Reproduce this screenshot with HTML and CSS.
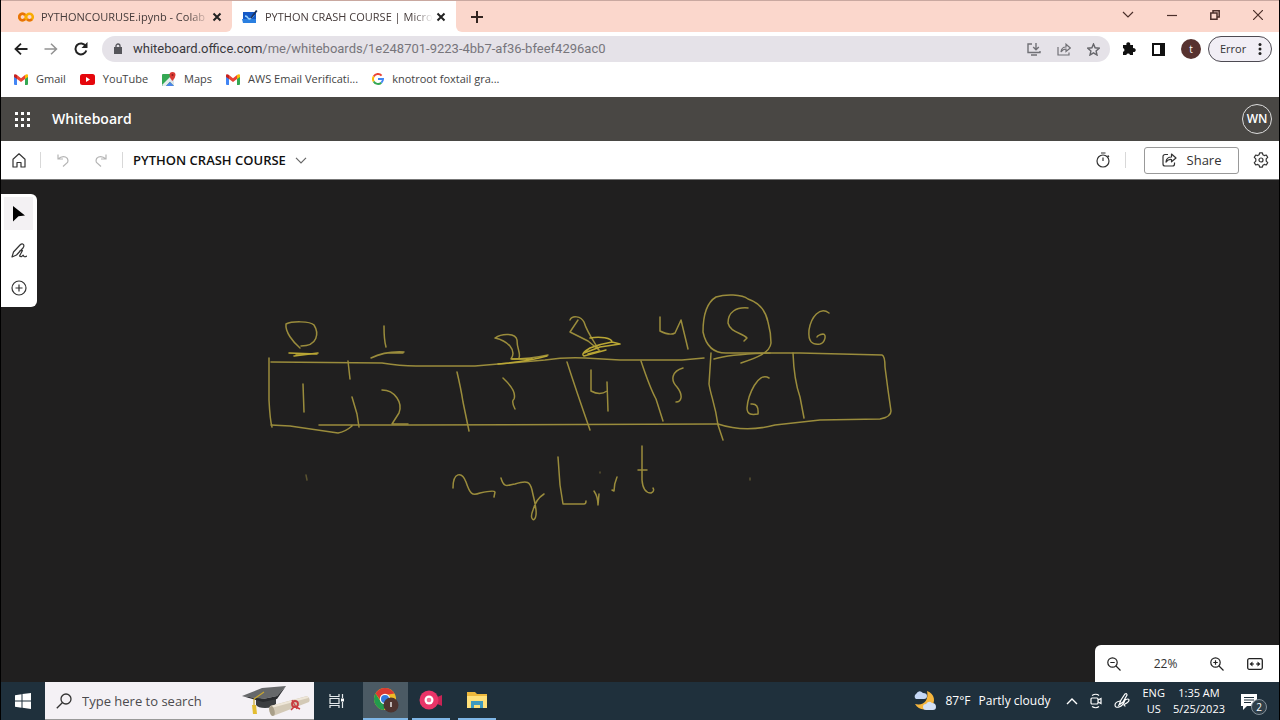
FILE: index.html
```html
<!DOCTYPE html>
<html lang="en">
<head>
<meta charset="utf-8">
<title>PYTHON CRASH COURSE | Microsoft Whiteboard</title>
<link rel="stylesheet" href="styles.css">
</head>
<body>
<svg class="defs" width="0" height="0" aria-hidden="true">
  <symbol id="gmail" viewBox="0 0 14 11"><path d="M0 2v8a1 1 0 0 0 1 1h2V4z" fill="#4285f4"/><path d="M14 2v8a1 1 0 0 1-1 1h-2V4z" fill="#34a853"/><path d="M3 5V1l4 3.200L11 1v4L7 8z" fill="#ea4335"/><path d="M0 3V1.500C0 0 1.500-.4 3 1v4z" fill="#c5221f"/><path d="M14 3V1.500C14 0 12.500-.4 11 1v4z" fill="#fbbc04"/></symbol>
  <symbol id="close" viewBox="0 0 10 10"><path d="M1.500 1.500l7 7M8.500 1.500l-7 7" fill="none" stroke="currentColor" stroke-width="2"/></symbol>
</svg>

<header class="tabs">
  <div class="tab tab-idle">
    <svg width="16" height="10" viewBox="0 0 16 10" fill="none" stroke-width="2.500"><circle cx="4.500" cy="5" r="3.300" stroke="#f9ab00"/><circle cx="11.500" cy="5" r="3.300" stroke="#f9ab00"/><path d="M7 2.800a3.300 3.300 0 1 0 0 4.400M9.200 7.300a3.300 3.300 0 0 0 4.600 0" stroke="#e8710a"/></svg>
    <span class="tab-title">PYTHONCOURUSE.ipynb - Colab</span>
    <button class="icon-btn" aria-label="Close tab"><svg width="10" height="10"><use href="#close"/></svg></button>
  </div>
  <div class="tab tab-active">
    <svg width="16" height="14" viewBox="0 0 16 14"><path d="M1 2h13v8H1z" fill="#1459c7"/><path d="M0 9h14v4H1z" fill="#2a7fe0"/><path d="M3 6q2 0 3 2t3 0l3-3" fill="none" stroke="#9fd8ff" stroke-width="1.500"/><path d="M8 8l6-8 1.500 1-6 7.500z" fill="#17305e"/></svg>
    <span class="tab-title">PYTHON CRASH COURSE | Micro</span>
    <button class="icon-btn" aria-label="Close tab"><svg width="10" height="10"><use href="#close"/></svg></button>
  </div>
  <div class="strip">
    <button class="icon-btn" aria-label="New tab"><svg width="12" height="12" viewBox="0 0 12 12"><path d="M6 0v12M0 6h12" stroke="#332420" stroke-width="2"/></svg></button>
    <div class="window-buttons">
      <button class="icon-btn" aria-label="Search tabs"><svg width="12" height="8" viewBox="0 0 12 8"><path d="M1 1l5 5 5-5"/></svg></button>
      <button class="icon-btn" aria-label="Minimize"><svg width="10" height="10" viewBox="0 0 10 10"><path d="M0 5.500h10"/></svg></button>
      <button class="icon-btn" aria-label="Restore"><svg width="10" height="10" viewBox="0 0 10 10"><path d="M.8 3h6.200v6.200H.8zM3 3V.8h6.200V7H7" stroke-width="1.500"/></svg></button>
      <button class="icon-btn" aria-label="Close"><svg width="10" height="10" viewBox="0 0 10 10"><path d="M0 0l10 10M10 0L0 10"/></svg></button>
    </div>
  </div>
</header>

<div class="toolbar">
  <button class="icon-btn" aria-label="Back"><svg width="14" height="12" viewBox="0 0 14 12" fill="none" stroke="#222" stroke-width="1.800"><path d="M13.500 6H1.500M7 .7L1.500 6 7 11.300"/></svg></button>
  <button class="icon-btn" aria-label="Forward"><svg width="14" height="12" viewBox="0 0 14 12" fill="none" stroke="#929292" stroke-width="1.500"><path d="M.5 6h12M7 .7L12.500 6 7 11.300"/></svg></button>
  <button class="icon-btn" aria-label="Reload"><svg width="14" height="14" viewBox="0 0 14 14"><path d="M11.700 4A5.500 5.500 0 1 0 12.300 8.500" fill="none" stroke="#222" stroke-width="2"/><path d="M13.500 0v6h-6z" fill="#222"/></svg></button>
  <div class="address">
    <svg width="8" height="12" viewBox="0 0 8 12"><path d="M0 4h8v7H0z" fill="#55555a"/><path d="M2 5V3a2 2 0 0 1 4 0v2" fill="none" stroke="#55555a" stroke-width="1.300"/></svg>
    <span class="url"><span class="host">whiteboard.office.com</span>/me/whiteboards/1e248701-9223-4bb7-af36-bfeef4296ac0</span>
    <button class="icon-btn" aria-label="Install app"><svg width="14" height="13" viewBox="0 0 14 13" fill="none" stroke="#717176" stroke-width="1.400"><path d="M5 1H1v8.500h12V8M4 12h6M9 0v6.500M6.200 4L9 6.800 11.800 4"/></svg></button>
    <button class="icon-btn" aria-label="Share page"><svg width="14" height="13" viewBox="0 0 14 13" fill="none" stroke="#717176" stroke-width="1.200"><path d="M1 4v8h11V9.500M4 9q.5-5 5-5V1.200L13.300 5 9 8.500V6Q6 6 4 9z"/></svg></button>
    <button class="icon-btn" aria-label="Bookmark"><svg width="13" height="13" viewBox="0 0 13 13" fill="none" stroke="#66666b" stroke-width="1.400"><path d="M6.500 1l1.600 3.800 4.100.4-3.100 2.700.9 4.100-3.500-2.200L3 12l.9-4.100L.8 5.200l4.100-.4z"/></svg></button>
  </div>
  <button class="icon-btn" aria-label="Extensions"><svg width="14" height="14" viewBox="0 0 14 14"><path d="M1 3h3.500a2 2 0 1 1 3.600 0H11v3.200a2 2 0 1 1 0 3.700V13H8a1.900 1.900 0 0 0-3.700 0H1V9.800a1.900 1.900 0 0 0 0-3.700z" fill="#111"/></svg></button>
  <button class="icon-btn" aria-label="Side panel"><svg width="13" height="13" viewBox="0 0 13 13"><path d="M1 1h11v11H1z" fill="none" stroke="#111" stroke-width="2"/><path d="M8 1h4v11H8z" fill="#111"/></svg></button>
  <button class="profile" aria-label="Profile">t</button>
  <button class="error-btn">Error<svg width="4" height="12" viewBox="0 0 4 12" fill="#222"><circle cx="2" cy="1.500" r="1.500"/><circle cx="2" cy="6" r="1.500"/><circle cx="2" cy="10.500" r="1.500"/></svg></button>
</div>

<nav class="bookmarks" aria-label="Bookmarks">
  <a href="#"><svg width="14" height="11"><use href="#gmail"/></svg>Gmail</a>
  <a href="#"><svg width="15" height="11" viewBox="0 0 15 11"><rect width="15" height="11" rx="2.500" fill="#e5060c"/><path d="M6 3v5l4-2.500z" fill="#fff"/></svg>YouTube</a>
  <a href="#"><svg width="14" height="14" viewBox="0 0 14 14"><rect y="2" width="12" height="12" rx="1" fill="#34a853"/><path d="M12 14L6 8l6-5z" fill="#dde3ea"/><path d="M0 13L10 3l2 2-8 9H1z" fill="#e6ecec"/><path d="M4 14l4-4 4 4z" fill="#4c83ea"/><path d="M10.300 9Q7.500 6 7.500 3a3 3 0 0 1 6 0q0 3-3.200 6z" fill="#d93b35"/><circle cx="10.500" cy="3" r="1" fill="#8c1b18"/></svg>Maps</a>
  <a href="#"><svg width="14" height="11"><use href="#gmail"/></svg>AWS Email Verificati...</a>
  <a href="#"><svg width="12" height="12" viewBox="0 0 12 12" fill="none" stroke-width="2"><path d="M9.600 2.600A5 5 0 0 0 1.700 3.500" stroke="#ea4335"/><path d="M1.700 3.500a5 5 0 0 0 0 5" stroke="#fbbc04"/><path d="M1.700 8.500a5 5 0 0 0 7.600 1.200" stroke="#34a853"/><path d="M9.300 9.700A5 5 0 0 0 11 6H6" stroke="#4285f4"/></svg>knotroot foxtail gra...</a>
</nav>

<div class="app-bar">
  <button class="icon-btn" aria-label="App launcher"><svg width="15" height="15" viewBox="0 0 15 15" fill="#fff"><path d="M0 0h3v3H0zM6 0h3v3H6zM12 0h3v3h-3zM0 6h3v3H0zM6 6h3v3H6zM12 6h3v3h-3zM0 12h3v3H0zM6 12h3v3H6zM12 12h3v3h-3z"/></svg></button>
  <span class="app-name">Whiteboard</span>
  <button class="avatar">WN</button>
</div>

<div class="commands">
  <button class="icon-btn home" aria-label="Home"><svg width="14" height="15" viewBox="0 0 14 15" fill="none" stroke="#333" stroke-width="1.200"><path d="M1 6.200L7 .8l6 5.400V14H9V9.500H5V14H1z" stroke-linejoin="round"/></svg></button>
  <span class="rule"></span>
  <button class="icon-btn undo" aria-label="Undo"><svg width="12" height="13" viewBox="0 0 12 13" fill="none" stroke="#b5b5b5" stroke-width="1.200"><path d="M1 .5v4.500h5M1 5Q5 1.500 8.500 3t2 5.500L6 12.500"/></svg></button>
  <button class="icon-btn redo" aria-label="Redo"><svg width="12" height="13" viewBox="0 0 12 13" fill="none" stroke="#b5b5b5" stroke-width="1.200"><path d="M11 .5v4.500H6M11 5Q7 1.500 3.500 3t-2 5.500L6 12.500"/></svg></button>
  <span class="rule"></span>
  <button class="board-name">PYTHON CRASH COURSE<svg width="12" height="7" viewBox="0 0 12 7" fill="none" stroke="#666" stroke-width="1.200"><path d="M1 .8l5 5 5-5"/></svg></button>
  <button class="icon-btn timer" aria-label="Timer"><svg width="15" height="16" viewBox="0 0 15 16" fill="none" stroke="#333" stroke-width="1.200"><circle cx="7" cy="9" r="6"/><path d="M5 1h4.500M7 5.500V9M11.700 3.500l1.300 1.300"/></svg></button>
  <span class="rule"></span>
  <button class="share"><svg width="15" height="14" viewBox="0 0 15 14" fill="none" stroke="#333" stroke-width="1.200" stroke-linejoin="round"><path d="M6 1.500H3a2 2 0 0 0-2 2V11a2 2 0 0 0 2 2h7.500a2 2 0 0 0 2-2v-1.500M4 9q.5-5 5.500-5V1L14 5l-4.500 3.800V6.500Q6.500 6 4 9z"/></svg>Share</button>
  <button class="icon-btn" aria-label="Settings"><svg width="16" height="16" viewBox="0 0 16 16" fill="none" stroke="#333" stroke-width="1.200" stroke-linejoin="round"><path d="M6.600.8h2.800l.5 2 1.400.8 2-.6 1.400 2.400-1.500 1.500v2.200l1.500 1.500-1.400 2.400-2-.6-1.400.8-.5 2H6.600l-.5-2-1.400-.8-2 .6-1.400-2.400 1.500-1.500V6.900L1.300 5.400 2.700 3l2 .6 1.400-.8z"/><circle cx="8" cy="8" r="2"/></svg></button>
</div>

<main class="board">
  <svg class="ink" viewBox="1 180 1278 502" role="img" aria-label="Hand-drawn list of seven cells with indexes, labelled mylist">
    <g>
      <path d="M286 324C292 321 310 321 314 325C319 333 318 346 301 346M286 324C285 332 293 342 300 348"/>
      <path class="bright" d="M289 353L317 354M294 356L318 353M296 355L312 354"/>
      <path d="M384 326Q384 340 386 347M371 358Q385 351 404 352M388 353H403"/>
      <path d="M269 358V400Q270 420 272 427M271 362L382 363Q400 366 416 366H475Q510 363 545 360Q565 357 585 358L620 360H682L704 358"/>
      <path d="M271 425L290 426L338 433Q345 432 352 426M319 425L410 425L718 424"/>
      <path d="M348 361L350 379M352 397L357 414L359 427M303 384L304 412M382 390C395 390 403 403 399 413L392 424H408"/>
      <path d="M457 372Q461 389 463 402L469 431M503 378Q517 391 514 399Q511 401 515 409"/>
      <path d="M495 338C502 333 516 333 517 340C517 350 521 353 519 358M495 338C508 341 517 350 511 359Q530 359 548 355"/>
      <path class="bright" d="M498 364Q525 362 547 356M512 359L532 359"/>
      <path d="M570 320C572 315 581 316 584 322C587 332 593 340 599 350M578 320L570 332L588 341L599 350"/>
      <path class="bright" d="M590 338C600 336 612 338 612 342Q600 344 590 348Q580 354 584 356L606 350M612 342L620 344L600 347L584 353M588 354L600 351"/>
      <path d="M567 362Q576 390 590 430M591 370V391Q600 396 607 391M607 382L608 411M641 361Q650 388 656 399L663 421"/>
      <path d="M660 317V331Q670 336 675 333L681 320L688 349"/>
      <path d="M770 353H728C713 354 706 346 703 332C703 315 706 303 716 297C725 294 742 294 748 299C760 303 766 312 768 322Q771 333 771 343C770 353 756 358 741 363"/>
      <path d="M748 308C736 307 728 312 728 323C730 332 742 333 747 338L744 341"/>
      <path d="M829 313C820 306 811 317 809 330C808 342 812 345 820 344C825 343 827 334 823 334Q818 335 817 337"/>
      <path d="M714 359Q730 354 770 353H800L882 355Q885 356 885 367L888 390L891 411Q891 417 880 419L820 420L775 425Q745 433 718 424M711 353L709 384C711 397 715 403 718 425L723 440"/>
      <path d="M793 353Q794 380 800 397L804 418M683 368C672 371 670 380 677 387C684 396 681 402 676 402M769 378C758 371 748 395 747 408C747 415 752 415 758 414Q759 403 751 404"/>
      <path d="M453 488C453 472 462 471 466 482C470 494 472 496 480 493Q494 490 495 492L494 497M501 478C504 489 508 485 515 484C528 480 530 482 532 490C534 500 537 508 536 515C535 523 529 520 533 510Q536 499 544 494"/>
      <path d="M558 457L560 485L563 504H584Q586 504 586 501M594 491Q598 497 598 505L599 494M617 477Q614 484 614 491L612 490M642 446V480Q643 493 651 493Q655 491 653 488M638 470H647"/>
      <path class="faint" d="M306 475L307 480M750 478V480M600 472V473"/>
    </g>
  </svg>
  <div class="tools" role="toolbar" aria-label="Drawing tools">
    <button class="tool tool-on" aria-label="Select"><svg width="12" height="16" viewBox="0 0 12 16"><path d="M0 0l12 9.500-6.500.8L0 15.500z" fill="#000"/></svg></button>
    <button class="tool" aria-label="Ink"><svg width="16" height="16" viewBox="0 0 16 16" fill="none" stroke="#333" stroke-width="1.200" stroke-linecap="round" stroke-linejoin="round"><path d="M1 14l1.500-5L9 2q2-2 3.300-.7T12 5L5.500 12zM8.500 8l3-.5L8.500 13q2 1.500 3.700-.8 1 2.500 3.300 1"/></svg></button>
    <button class="tool" aria-label="Create"><svg width="16" height="16" viewBox="0 0 16 16" fill="none" stroke="#333" stroke-width="1.200"><circle cx="8" cy="8" r="7"/><path d="M8 4.500v7M4.500 8h7"/></svg></button>
  </div>
  <div class="zoom">
    <button class="icon-btn" aria-label="Zoom out"><svg width="14" height="14" viewBox="0 0 14 14" fill="none" stroke="#222" stroke-width="1.200"><circle cx="5.500" cy="5.500" r="4.700"/><path d="M9 9l4.500 4.500M3.300 5.500h4.400"/></svg></button>
    <span class="level">22%</span>
    <button class="icon-btn" aria-label="Zoom in"><svg width="14" height="14" viewBox="0 0 14 14" fill="none" stroke="#222" stroke-width="1.200"><circle cx="5.500" cy="5.500" r="4.700"/><path d="M9 9l4.500 4.500M3.300 5.500h4.400M5.500 3.300v4.400"/></svg></button>
    <button class="icon-btn" aria-label="Fit to screen"><svg width="16" height="12" viewBox="0 0 16 12"><rect x=".7" y=".7" width="14.600" height="10.600" rx="1.500" fill="none" stroke="#222" stroke-width="1.300"/><path d="M2.500 6l3-2.500v2h1.500v1H5.500v2zM13.500 6l-3-2.500v2H9v1h1.500v2z" fill="#222"/></svg></button>
  </div>
</main>

<footer class="taskbar">
  <button class="start" aria-label="Start"><svg width="16" height="16" viewBox="0 0 16 16" fill="#fff"><path d="M0 2.300l6.500-1v6.200H0zM7.500 1.100L16 0v7.500H7.500zM0 8.500h6.500v6.200l-6.500-1zM7.500 8.500H16V16l-8.500-1.200z"/></svg></button>
  <label class="search">
    <svg width="16" height="16" viewBox="0 0 16 16" fill="none" stroke="#333" stroke-width="1.300"><circle cx="10" cy="6" r="5"/><path d="M6.500 9.500L.8 15.200"/></svg>
    <input type="text" aria-label="Search" placeholder="Type here to search">
    <svg width="70" height="32" viewBox="0 0 70 32"><path d="M14 11q10 6 20 2v6q-3 4-11 4-7 0-9-3z" fill="#3b3d40"/><path d="M0 11L20 3l24-2-9 10-14 3z" fill="#66686a"/><path d="M0 11l21 3 14-3 9-10-9 13-14 3z" fill="#292b2e"/><path d="M22 7l-10 7v7" fill="none" stroke="#c9a62e" stroke-width="1.200"/><path d="M10 20h4l1 9h-4z" fill="#e3bd32"/><path d="M28 21l37-10q4 3 2 6L31 31q-5-3-3-10z" fill="#d3c9b6"/><path d="M29 22l37-10" stroke="#eee6d8" stroke-width="2"/><ellipse cx="30" cy="26" rx="2.500" ry="5" transform="rotate(-15 30 26)" fill="#a99f89"/><path d="M50 15l5 9" fill="none" stroke="#c94a4c" stroke-width="1.500"/><circle cx="53" cy="19" r="3" fill="none" stroke="#c93b3f" stroke-width="1.800"/><path d="M52 22l-3 3M54 22l4 2" stroke="#c93b3f" stroke-width="1.500"/></svg>
  </label>
  <button class="task" aria-label="Task view"><svg width="16" height="16" viewBox="0 0 16 16" fill="none" stroke="#e4e9ec" stroke-width="1.200"><path d="M1 1v2.500h9V1M1 15v-2.500h9V15M1 5.500h9v5H1zM13.500 1v4M13.500 9v6"/><path d="M12 5.500h3v3h-3z" fill="#fff" stroke="none"/></svg></button>
  <button class="task running current" aria-label="Chrome"><svg width="26" height="26" viewBox="0 0 26 26"><circle cx="12" cy="12" r="11" fill="#eebb27"/><path d="M2.500 6.500A11 11 0 0 1 21.500 6.500L12 8 8 14z" fill="#d93932"/><path d="M2.500 6.500L8 15l5 2-2 6A11 11 0 0 1 2.500 6.500z" fill="#239b4d"/><circle cx="12" cy="12" r="5.200" fill="#fff"/><circle cx="12" cy="12" r="4" fill="#3479de"/><circle cx="18" cy="18" r="7.500" fill="#4e342f"/><path d="M18 15v5" stroke="#fff" stroke-width="1.300"/></svg></button>
  <button class="task running" aria-label="Screen recorder"><svg width="24" height="20" viewBox="0 0 24 20"><path d="M16 8l7-3v11l-7-3z" fill="#c92354"/><circle cx="10" cy="10" r="9.500" fill="#e93468"/><circle cx="10" cy="10" r="4.500" fill="#fff"/><circle cx="10" cy="10" r="2.300" fill="#ef7395"/></svg></button>
  <button class="task running" aria-label="File Explorer"><svg width="22" height="18" viewBox="0 0 22 18"><path d="M1 1h8l2 2h10v14H1z" fill="#edb83c"/><path d="M1 5h20v12H1z" fill="#ffe07a"/><path d="M5 10h12v7h-3v-3H8v3H5z" fill="#3f9ac0"/></svg></button>
  <div class="tray">
    <button class="weather"><svg width="24" height="22" viewBox="0 0 24 22"><path d="M14 1c8 3 9 11 4 16-5 4-13 3-16-3 9 2 14-4 12-13z" fill="#f5b63e"/><path d="M3 9a3 3 0 0 1 0-5Q6-1 10 3q4 0 4 3 0 3-3 3z" fill="#c5d8f5"/><path d="M13 20a3 3 0 0 1 0-6q3-4 6-1 4 0 4 4 0 3-3 3z" fill="#d4e0f4"/></svg><span>87°F</span><span>Partly cloudy</span></button>
    <button class="icon-btn" aria-label="Show hidden icons"><svg width="12" height="7" viewBox="0 0 12 7" fill="none" stroke="#fff" stroke-width="1.400"><path d="M1 6l5-5 5 5"/></svg></button>
    <button class="icon-btn" aria-label="Meet now"><svg width="12" height="16" viewBox="0 0 12 16" fill="none" stroke="#fff" stroke-width="1.200"><rect x="1" y="5" width="7" height="6" rx="1"/><path d="M8 7l3-1.500v5L8 9M2 2.500q4-2.500 7 0M2 13.500q4 2.500 7 0"/></svg></button>
    <button class="icon-btn" aria-label="Pen workspace"><svg width="16" height="16" viewBox="0 0 16 16" fill="none" stroke="#fff" stroke-width="1.200" stroke-linecap="round"><path d="M5 12l2-5 4-6q2-1 2 1l-4 7zM6 8Q1 9 1 12t4 2 6-7q4-2 4 0t-4 4q-2 1 0 2"/></svg></button>
    <button class="stack">ENG<br>US</button>
    <button class="stack">1:35 AM<br>5/25/2023</button>
    <button class="notes" aria-label="2 notifications"><svg width="16" height="16" viewBox="0 0 16 16"><path d="M0 0h16v12H6l-4 4v-4H0z" fill="#fff"/><path d="M3 3.500h10M3 6h10M3 8.500h7" stroke="#1f303c"/></svg><span class="badge">2</span></button>
  </div>
</footer>
</body>
</html>
```
FILE: styles.css
```css
* { box-sizing: border-box; }

body {
  margin: 0;
  height: 100vh;
  display: flex;
  flex-direction: column;
  border: solid #000;
  border-width: 0 1px;
  background: #fff;
  color: #333;
  font: 12px/16px "Open Sans", "Noto Sans", sans-serif;
  overflow: hidden;
}

.defs { position: absolute; }
svg { display: block; flex: none; }

button {
  margin: 0;
  padding: 0;
  border: 0;
  background: none;
  color: inherit;
  font: inherit;
}

.icon-btn { display: flex; flex: none; align-items: center; justify-content: center; }

/* Tab strip */
.tabs { display: flex; flex: none; height: 32px; border-top: 1px solid #c9a8a0; }
.tab { display: flex; align-items: center; gap: 7px; color: #453b3a; }
.tab-idle {
  width: 231px;
  padding: 0 10px 0 17px;
  background: #fbd7cc;
  border-bottom-right-radius: 6px;
}
.tab-active { width: 224px; padding: 0 10px; }
.tab-title {
  flex: 1;
  min-width: 0;
  margin-right: -4px;
  overflow: hidden;
  white-space: nowrap;
  font-size: 11px;
  -webkit-mask-image: linear-gradient(to right, #000 88%, transparent);
  mask-image: linear-gradient(to right, #000 88%, transparent);
}
.tab .icon-btn { color: #222; }
.strip {
  flex: 1;
  display: flex;
  align-items: center;
  justify-content: space-between;
  padding: 0 16px 0 15px;
  background: #fbd7cc;
  border-bottom-left-radius: 6px;
}
.window-buttons { display: flex; align-items: center; gap: 33px; padding-bottom: 4px; }
.window-buttons svg { fill: none; stroke: #4b2f2a; stroke-width: 1.2; }

/* Address row */
.toolbar { display: flex; flex: none; align-items: center; gap: 16px; height: 34px; padding: 0 7px 0 13px; }
.address {
  flex: 1;
  display: flex;
  align-items: center;
  gap: 16px;
  height: 26px;
  margin: 0 -4px 0 -2px;
  padding: 0 10px 0 12px;
  border-radius: 13px;
  background: #e5e2e8;
}
.url { flex: 1; margin-left: -5px; color: #77757b; font-family: Roboto, "Open Sans", sans-serif; font-size: 13px; white-space: nowrap; }
.host { color: #39383c; }
.profile { width: 20px; height: 20px; border-radius: 50%; background: #57322f; color: #fff; font-size: 10px; line-height: 18px; }
.error-btn {
  display: flex;
  align-items: center;
  justify-content: space-between;
  width: 64px;
  height: 26px;
  margin-left: -9px;
  padding: 0 9px 0 11px;
  border: 1px solid #4d4a52;
  border-radius: 13px;
  background: #f1eef5;
  font-size: 11px;
}

/* Bookmarks */
.bookmarks { display: flex; flex: none; align-items: center; gap: 14px; height: 31px; padding: 0 13px 5px; }
.bookmarks a {
  display: flex;
  align-items: center;
  gap: 8px;
  color: #444;
  font-size: 11px;
  text-decoration: none;
  white-space: nowrap;
}

/* App header */
.app-bar { display: flex; flex: none; align-items: center; gap: 22px; height: 44px; padding: 0 7px 0 14px; background: #494744; color: #fff; }
.app-name { flex: 1; font-size: 14px; line-height: 20px; font-weight: 600; }
.avatar { width: 30px; height: 30px; border: 1px solid #ddd; border-radius: 50%; font-weight: 600; }

/* Board commands */
.commands { display: flex; flex: none; align-items: center; height: 39px; padding: 0 10px 0 11px; border-bottom: 1px solid #777; }
.rule { width: 1px; height: 16px; background: #d8d8d8; }
.home { margin-right: 14px; }
.undo { margin: 0 26px 0 16px; }
.redo { margin-right: 15px; }
.board-name { display: flex; align-items: center; gap: 9px; margin-left: 10px; color: #111; font-size: 13px; font-weight: 600; }
.timer { margin: 0 14px 0 auto; }
.share {
  display: flex;
  align-items: center;
  justify-content: center;
  gap: 10px;
  width: 95px;
  height: 27px;
  margin: 0 14px 0 18px;
  border: 1px solid #999;
  border-radius: 3px;
  font-size: 13px;
}

/* Drawing surface */
.board { position: relative; flex: 1; min-height: 0; background: #201f1f; }
.ink { width: 100%; height: 100%; fill: none; stroke: #9a8c3c; stroke-width: 1.5; stroke-linecap: round; stroke-linejoin: round; }
.bright { stroke: #b9a634; }
.faint { stroke: #5a5330; }
.tools {
  position: absolute;
  top: 14px;
  left: 0;
  display: grid;
  gap: 4px;
  padding: 3px 4px 3px 3px;
  border-radius: 0 6px 6px 0;
  background: #fff;
}
.tool { display: flex; align-items: center; justify-content: center; width: 29px; height: 33px; }
.tool-on { background: #f3f1f3; }
.zoom {
  position: absolute;
  right: 0;
  bottom: 0;
  display: flex;
  align-items: center;
  width: 184px;
  height: 37px;
  padding: 0 16px 0 12px;
  border-top-left-radius: 6px;
  background: #fff;
}
.level { flex: 1; text-align: center; }
.zoom .icon-btn + .icon-btn { margin-left: 23px; }

/* Taskbar */
.taskbar { display: flex; flex: none; height: 38px; background: #1f303c; color: #fff; }
.start { display: flex; align-items: center; justify-content: center; width: 44px; }
.search { display: flex; align-items: center; gap: 10px; width: 269px; padding: 0 2px 0 11px; border-bottom: 1px solid #999; background: #f4f1f5; }
.search input { flex: 1; min-width: 0; padding: 0; border: 0; outline: 0; background: none; font: 13px/20px "Open Sans", "Noto Sans", sans-serif; }
.search input::placeholder { color: #4b4a4d; opacity: 1; }
.task { display: flex; align-items: center; justify-content: center; width: 46px; }
.running { border-bottom: 2px solid #7fb6e6; margin: 0 4px; width: 38px; }
.current { margin: 0 0 0 3px; width: 45px; background: #4b5a64; }
.tray { display: flex; align-items: center; gap: 12px; margin-left: auto; padding-right: 12px; }
.weather { display: flex; align-items: center; gap: 8px; font-size: 12px; white-space: nowrap; margin-right: 4px; }
.stack { font-size: 11px; text-align: center; white-space: nowrap; }
.stack + .stack { margin-left: -4px; }
.notes { position: relative; width: 26px; height: 26px; margin-left: 4px; padding: 2px 0 0 0; }
.badge {
  position: absolute;
  right: 0;
  bottom: -1px;
  width: 16px;
  height: 16px;
  border: 1px solid #84909a;
  border-radius: 50%;
  background: #2f3f4a;
  font-size: 10px;
  line-height: 14px;
}
```
